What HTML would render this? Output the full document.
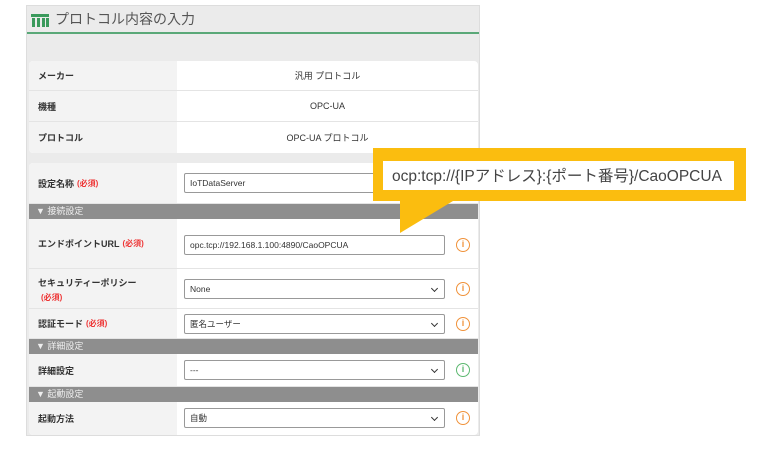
<!DOCTYPE html>
<html><head><meta charset="utf-8"><style>
*{box-sizing:border-box;margin:0;padding:0}
body{width:768px;height:452px;background:#fff;font-family:"Liberation Sans","Noto Sans CJK JP",sans-serif;position:relative;overflow:hidden;color:#333}
.panel{position:absolute;left:26px;top:5px;width:454px;height:431px;background:#ebebeb;border:1px solid #ddd}
.title{position:absolute;left:0;top:0;width:452px;height:28px;border-bottom:2px solid #5aa878;font-size:14px;color:#555;padding:3px 0 0 28px}
.ico{position:absolute;left:4px;top:8px;width:18px;height:13px}
.box{position:absolute;left:2px;width:449px;background:#fff;border-radius:4px;overflow:hidden}
.row{position:absolute;left:0;width:449px;border-bottom:1px solid #e4e4e4}
.lab{position:absolute;left:0;top:0;bottom:0;width:148px;background:#f3f3f3;font-size:9px;font-weight:bold;padding-left:9px;display:flex;align-items:center}
.val{position:absolute;left:148px;right:0;top:0;bottom:0;font-size:9px;display:flex;align-items:center;justify-content:center}
.req{color:#e33;font-size:8px;margin-left:3px}
.hd{position:absolute;left:0;width:449px;height:15px;background:#8e8e8e;color:#eee;font-size:9px;padding-left:7px;line-height:15px}
.in{position:absolute;left:155px;width:261px;height:20px;border:1px solid #999;border-radius:2px;font-size:8.5px;padding-left:5px;line-height:18px;background:#fff}
.in.s:after{content:"";position:absolute;right:7px;top:6px;width:4px;height:4px;border-right:1.5px solid #333;border-bottom:1.5px solid #333;transform:rotate(45deg)}
.i{position:absolute;left:427px;width:14px;height:14px;border:1.5px solid #f0923a;border-radius:50%;color:#f0923a;font-size:9px;text-align:center;line-height:11px;font-weight:bold}
.i.g{border-color:#5cb870;color:#5cb870}
</style></head><body>
<div class="panel">
 <div class="title"><svg class="ico" viewBox="0 0 18 13"><rect x="0" y="0" width="18" height="3" fill="#3a9a5c"/><rect x="1" y="4" width="3" height="9" fill="#3a9a5c"/><rect x="6" y="4" width="3" height="9" fill="#3a9a5c"/><rect x="11" y="4" width="3" height="9" fill="#3a9a5c"/><rect x="15" y="4" width="3" height="9" fill="#3a9a5c"/></svg>プロトコル内容の入力</div>
 <div class="box" style="top:55px;height:92px">
  <div class="row" style="top:0;height:30px"><div class="lab">メーカー</div><div class="val">汎用 プロトコル</div></div>
  <div class="row" style="top:30px;height:31px"><div class="lab">機種</div><div class="val">OPC-UA</div></div>
  <div class="row" style="top:61px;height:31px;border:0"><div class="lab">プロトコル</div><div class="val">OPC-UA プロトコル</div></div>
 </div>
 <div class="box" style="top:157px;height:272px">
  <div class="row" style="top:0;height:41px"><div class="lab">設定名称<span class="req">(必須)</span></div><div class="in" style="top:10px">IoTDataServer</div></div>
  <div class="hd" style="top:41px">▼ 接続設定</div>
  <div class="row" style="top:56px;height:50px"><div class="lab">エンドポイントURL<span class="req">(必須)</span></div><div class="in" style="top:16px">opc.tcp://192.168.1.100:4890/CaoOPCUA</div><div class="i" style="top:19px">i</div></div>
  <div class="row" style="top:106px;height:40px"><div class="lab" style="display:block;padding-top:7px;line-height:14px">セキュリティーポリシー<br><span class="req">(必須)</span></div><div class="in s" style="top:10px">None</div><div class="i" style="top:13px">i</div></div>
  <div class="row" style="top:146px;height:30px"><div class="lab">認証モード<span class="req">(必須)</span></div><div class="in s" style="top:5px">匿名ユーザー</div><div class="i" style="top:8px">i</div></div>
  <div class="hd" style="top:176px">▼ 詳細設定</div>
  <div class="row" style="top:191px;height:33px"><div class="lab">詳細設定</div><div class="in s" style="top:6px">---</div><div class="i g" style="top:9px">i</div></div>
  <div class="hd" style="top:224px">▼ 起動設定</div>
  <div class="row" style="top:239px;height:33px;border:0"><div class="lab">起動方法</div><div class="in s" style="top:6px">自動</div><div class="i" style="top:9px">i</div></div>
 </div>
</div>
<svg style="position:absolute;left:0;top:0" width="768" height="452"><polygon points="373,148 746,148 746,201 453,201 400,233 400,201 373,201" fill="#fbbd0f"/><rect x="383" y="161" width="351" height="29" fill="#fff"/></svg>
<div style="position:absolute;left:392px;top:164px;font-size:15.5px;color:#444;font-family:'Liberation Sans','Noto Sans CJK JP',sans-serif;white-space:nowrap">ocp:tcp://{IPアドレス}:{ポート番号}/CaoOPCUA</div>
</body></html>
